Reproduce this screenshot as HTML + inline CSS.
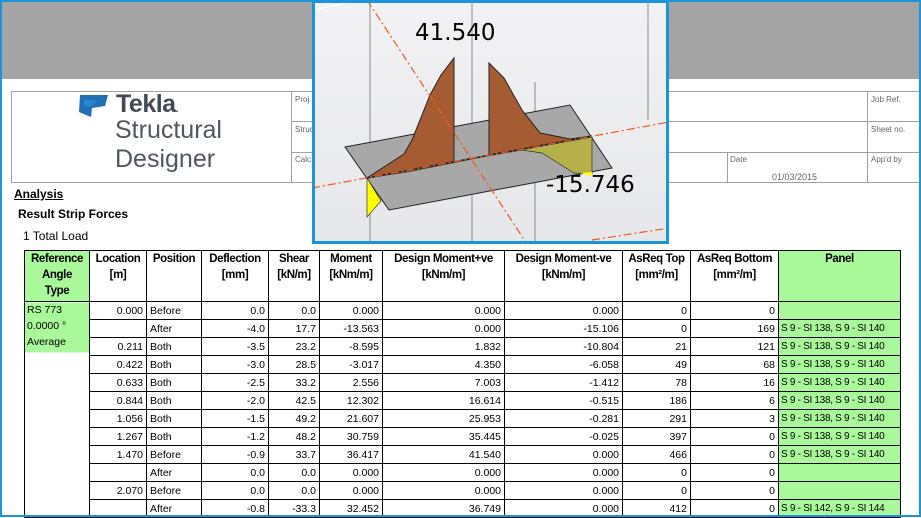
<!DOCTYPE html>
<html><head><style>
*{margin:0;padding:0;box-sizing:border-box}
body{width:921px;height:517px;overflow:hidden;background:#fff;font-family:"Liberation Sans",sans-serif;position:relative}
.frame{position:absolute;left:0;top:0;width:921px;height:517px;border:2px solid #1b95d7;z-index:10;pointer-events:none}
.gray{position:absolute;left:0;top:0;width:921px;height:79px;background:#a4a4a4}
.hdr{position:absolute;left:11px;top:91px;width:910px;height:92px;border:1px solid #a0a0a0}
.l{position:absolute;background:#a0a0a0}
.sm{position:absolute;font-size:8px;color:#666}
.t{position:absolute;font-size:12px;color:#000}
table{position:absolute;left:24px;top:250px;border-collapse:collapse;font-size:10.5px;table-layout:fixed;width:876px}
td,th{border:1px solid #000;height:18px;padding:0 3px;white-space:nowrap;overflow:hidden}
th{font-weight:bold;font-size:11.5px;letter-spacing:-0.4px;vertical-align:top;height:51px;line-height:16px;text-align:center;padding:0 1px}
td{text-align:right;line-height:16px}
td.p{text-align:left}
td.q{text-align:left;font-size:10px;letter-spacing:-0.3px;padding:0 2px}
.g{background:#a9f99b}
</style></head><body>
<div class="gray"></div>
<div class="hdr">
 <div class="l" style="left:279px;top:0;width:1px;height:90px"></div>
 <div class="l" style="left:855px;top:0;width:1px;height:90px"></div>
 <div class="l" style="left:715px;top:60px;width:1px;height:30px"></div>
 <div class="l" style="left:279px;top:29px;width:630px;height:1px"></div>
 <div class="l" style="left:279px;top:60px;width:630px;height:1px"></div>
 <div class="sm" style="left:283px;top:3px">Proj</div>
 <div class="sm" style="left:283px;top:33px">Struc</div>
 <div class="sm" style="left:283px;top:63px">Calc.</div>
 <div class="sm" style="left:859px;top:3px">Job Ref.</div>
 <div class="sm" style="left:859px;top:33px">Sheet no.</div>
 <div class="sm" style="left:859px;top:63px">App'd by</div>
 <div class="sm" style="left:718px;top:63px">Date</div>
 <div class="sm" style="left:760px;top:80px;font-size:9px">01/03/2015</div>
 <svg style="position:absolute;left:66px;top:1px" width="30" height="25"><path d="M2,2 L30,2 L27,13 L14,15 L13,24 L1,19 Z" fill="#1f6fb5"/><path d="M6,6 L20,8 L12,14 L5,13 Z" fill="#2a85cc"/></svg>
 <div style="position:absolute;left:104px;top:-2px;font-size:25px;font-weight:bold;color:#444a55;letter-spacing:-0.5px">Tekla<span style="font-size:10px">.</span></div>
 <div style="position:absolute;left:103px;top:24px;font-size:25px;color:#52565e;line-height:29px">Structural<br>Designer</div>
</div>
<div class="t" style="left:14px;top:187px;font-weight:bold;text-decoration:underline">Analysis</div>
<div class="t" style="left:18px;top:207px;font-weight:bold">Result Strip Forces</div>
<div class="t" style="left:23px;top:229px">1 Total Load</div>
<table>
<colgroup><col style="width:65px"><col style="width:57px"><col style="width:55px"><col style="width:67px"><col style="width:51px"><col style="width:63px"><col style="width:122px"><col style="width:118px"><col style="width:68px"><col style="width:88px"><col style="width:122px"></colgroup>
<tr><th class="g">Reference<br>Angle<br>Type</th><th>Location<br>[m]</th><th>Position</th><th>Deflection<br>[mm]</th><th>Shear<br>[kN/m]</th><th>Moment<br>[kNm/m]</th><th>Design Moment+ve<br>[kNm/m]</th><th>Design Moment-ve<br>[kNm/m]</th><th>AsReq Top<br>[mm²/m]</th><th>AsReq Bottom<br>[mm²/m]</th><th class="g">Panel</th></tr>
<tr><td rowspan="12" class="p" style="vertical-align:top;padding:0;background:linear-gradient(#a9f99b 0,#a9f99b 50px,#fff 50px)"><div style="padding:0 2px;line-height:16px">RS 773<br>0.0000 °<br>Average</div></td><td>0.000</td><td class="p">Before</td><td>0.0</td><td>0.0</td><td>0.000</td><td>0.000</td><td>0.000</td><td>0</td><td>0</td><td class="g"></td></tr>
<tr><td></td><td class="p">After</td><td>-4.0</td><td>17.7</td><td>-13.563</td><td>0.000</td><td>-15.106</td><td>0</td><td>169</td><td class="g q">S 9 - SI 138, S 9 - SI 140</td></tr>
<tr><td>0.211</td><td class="p">Both</td><td>-3.5</td><td>23.2</td><td>-8.595</td><td>1.832</td><td>-10.804</td><td>21</td><td>121</td><td class="g q">S 9 - SI 138, S 9 - SI 140</td></tr>
<tr><td>0.422</td><td class="p">Both</td><td>-3.0</td><td>28.5</td><td>-3.017</td><td>4.350</td><td>-6.058</td><td>49</td><td>68</td><td class="g q">S 9 - SI 138, S 9 - SI 140</td></tr>
<tr><td>0.633</td><td class="p">Both</td><td>-2.5</td><td>33.2</td><td>2.556</td><td>7.003</td><td>-1.412</td><td>78</td><td>16</td><td class="g q">S 9 - SI 138, S 9 - SI 140</td></tr>
<tr><td>0.844</td><td class="p">Both</td><td>-2.0</td><td>42.5</td><td>12.302</td><td>16.614</td><td>-0.515</td><td>186</td><td>6</td><td class="g q">S 9 - SI 138, S 9 - SI 140</td></tr>
<tr><td>1.056</td><td class="p">Both</td><td>-1.5</td><td>49.2</td><td>21.607</td><td>25.953</td><td>-0.281</td><td>291</td><td>3</td><td class="g q">S 9 - SI 138, S 9 - SI 140</td></tr>
<tr><td>1.267</td><td class="p">Both</td><td>-1.2</td><td>48.2</td><td>30.759</td><td>35.445</td><td>-0.025</td><td>397</td><td>0</td><td class="g q">S 9 - SI 138, S 9 - SI 140</td></tr>
<tr><td>1.470</td><td class="p">Before</td><td>-0.9</td><td>33.7</td><td>36.417</td><td>41.540</td><td>0.000</td><td>466</td><td>0</td><td class="g q">S 9 - SI 138, S 9 - SI 140</td></tr>
<tr><td></td><td class="p">After</td><td>0.0</td><td>0.0</td><td>0.000</td><td>0.000</td><td>0.000</td><td>0</td><td>0</td><td class="g"></td></tr>
<tr><td>2.070</td><td class="p">Before</td><td>0.0</td><td>0.0</td><td>0.000</td><td>0.000</td><td>0.000</td><td>0</td><td>0</td><td class="g"></td></tr>
<tr><td></td><td class="p">After</td><td>-0.8</td><td>-33.3</td><td>32.452</td><td>36.749</td><td>0.000</td><td>412</td><td>0</td><td class="g q">S 9 - SI 142, S 9 - SI 144</td></tr>
</table>
<svg style="position:absolute;left:312px;top:0;z-index:5" width="357" height="244" viewBox="0 0 357 244">
<defs><linearGradient id="bg" x1="0" y1="0" x2="0" y2="1"><stop offset="0" stop-color="#f2f2f4"/><stop offset="1" stop-color="#e6e7ea"/></linearGradient></defs>
<rect width="357" height="244" fill="url(#bg)"/>
<g stroke="#8a8a8a" stroke-width="1"><line x1="58" y1="0" x2="58" y2="244"/><line x1="160" y1="0" x2="160" y2="244"/><line x1="223" y1="82" x2="223" y2="244"/><line x1="336" y1="0" x2="336" y2="120"/></g>
<polyline points="0,10 50,0" stroke="#fff" fill="none"/>
<polygon points="33,147 258,105 300,168 77,210" fill="#a8a8a8" stroke="#222" stroke-width="1"/>
<polygon points="55,178 92,154 100,140 118,95 129,75 142,58 142,162" fill="#a55c33" stroke="#222" stroke-width="1"/>
<polygon points="177,63 192,78 210,110 228,133 258,139 280,136 177,155" fill="#a55c33" stroke="#222" stroke-width="1"/>
<polygon points="55,178 95,172 180,155 210,150 230,153 262,173 280,174 280,137" fill="#b5b04a" stroke="#333" stroke-width="0.7"/>
<polygon points="55,178 55,217 69,201" fill="#ffff00" stroke="#333" stroke-width="0.7"/>
<polygon points="268,173 280,176 280,172" fill="#ffff00"/>
<line x1="55" y1="178" x2="280" y2="136" stroke="#222" stroke-width="1.5"/>
<g stroke="#f05a1e" stroke-width="1.2" stroke-dasharray="8,3,2,3" fill="none"><line x1="0" y1="188" x2="357" y2="122"/><line x1="55" y1="0" x2="215" y2="244"/><line x1="280" y1="240" x2="357" y2="228"/></g>
<text x="103" y="40" font-family="DejaVu Sans, sans-serif" font-size="23" fill="#000">41.540</text>
<text x="234" y="192" font-family="DejaVu Sans, sans-serif" font-size="23" fill="#000">-15.746</text>
<rect x="1.5" y="1.5" width="354" height="241" fill="none" stroke="#1b95d7" stroke-width="3"/>
</svg>
<div class="frame"></div>
</body></html>
